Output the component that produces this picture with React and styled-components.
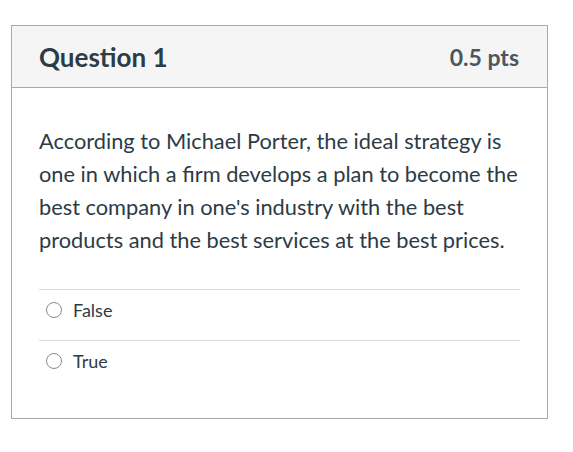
import React from "react";
import styled, { createGlobalStyle } from "styled-components";

const GlobalStyle = createGlobalStyle`
    body {
        margin: 0;
        background: #fff;
        font-family: Lato, "Noto Sans", sans-serif;
    }
`;

const Page = styled.div`
    padding: 25px 25px 0 11px;
`;

const Card = styled.div`
    width: 535px;
    height: 392px;
    border: 1px solid #a9a9a9;
    box-sizing: content-box;
`;

const Header = styled.div`
    display: flex;
    justify-content: space-between;
    align-items: center;
    height: 61px;
    padding: 0 28px 0 27px;
    background: #f5f5f5;
    border-bottom: 1px solid #a9a9a9;
`;

const Title = styled.h2`
    margin: 0;
    font-size: 26px;
    font-weight: 700;
    color: #2d3b45;
`;

const Points = styled.div`
    font-size: 23px;
    font-weight: 700;
    color: #4a5660;
`;

const Body = styled.div`
    padding: 36px 27px 0 27px;
`;

const Text = styled.p`
    margin: 0 0 33px;
    font-size: 21.8px;
    line-height: 33px;
    color: #2d3b45;
`;

const Answers = styled.div`
    display: flex;
    flex-direction: column;
`;

const Answer = styled.label`
    display: flex;
    align-items: center;
    gap: 11px;
    height: 22px;
    padding: 9px 0 19px 7px;
    border-top: 1px solid #dcdcdc;
    font-size: 18px;
    line-height: 22px;
    color: #2d3b45;
`;

const Radio = styled.span`
    width: 14px;
    height: 14px;
    border: 1px solid #8a8a8a;
    border-radius: 50%;
    flex-shrink: 0;
`;

const options = ["False", "True"];

const App = () => {
    return (
        <>
            <GlobalStyle />
            <Page>
                <Card>
                    <Header>
                        <Title>Question 1</Title>
                        <Points>0.5 pts</Points>
                    </Header>
                    <Body>
                        <Text>
                            According to Michael Porter, the ideal strategy is one in which a firm
                            develops a plan to become the best company in one's industry with the
                            best products and the best services at the best prices.
                        </Text>
                        <Answers>
                            {options.map(o => (
                                <Answer key={o}>
                                    <Radio />
                                    {o}
                                </Answer>
                            ))}
                        </Answers>
                    </Body>
                </Card>
            </Page>
        </>
    );
};

export default App;
